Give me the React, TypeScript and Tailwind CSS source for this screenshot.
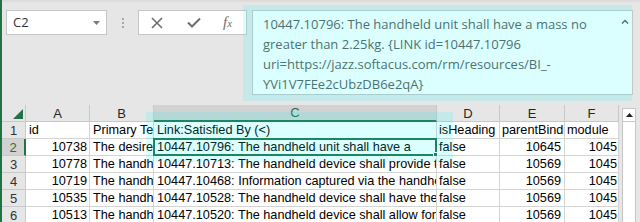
import React from "react";

type Row = {
  n: number;
  a: string;
  b: string;
  c: string;
  d: string;
  e: string;
  f: string;
  num: boolean;
};

const ROWS: Row[] = [
  { n: 1, a: "id", b: "Primary Text", c: "Link:Satisfied By (<)", d: "isHeading", e: "parentBinding", f: "module", num: false },
  { n: 2, a: "10738", b: "The desired weight", c: "10447.10796: The handheld unit shall have a", d: "false", e: "10645", f: "1045", num: true },
  { n: 3, a: "10778", b: "The handheld", c: "10447.10713: The handheld device shall provide the user", d: "false", e: "10569", f: "1045", num: true },
  { n: 4, a: "10719", b: "The handheld", c: "10447.10468: Information captured via the handheld", d: "false", e: "10569", f: "1045", num: true },
  { n: 5, a: "10535", b: "The handheld", c: "10447.10528: The handheld device shall have the", d: "false", e: "10569", f: "1045", num: true },
  { n: 6, a: "10513", b: "The handheld", c: "10447.10520: The handheld device shall allow for", d: "false", e: "10569", f: "1045", num: true },
];

const FORMULA = [
  "10447.10796: The handheld unit shall have a mass no",
  "greater than 2.25kg. {LINK id=10447.10796",
  "uri=https://jazz.softacus.com/rm/resources/BI_-",
  "YVi1V7FEe2cUbzDB6e2qA}",
];

const cell = "h-[17px] leading-[16px] border-r border-b border-[#d4d4d4] bg-white whitespace-nowrap overflow-hidden";
const head = "h-[17px] leading-[17px] border-r border-b border-[#c8c8c8] text-center text-[#262626]";

export default function App() {
  return (
    <div className="relative w-[640px] h-[222px] overflow-hidden bg-[#e6e6e6] border-l-2 border-[#217346] font-['Liberation_Sans',Arial,sans-serif] text-[12.7px] text-black">
      <div className="h-[3px] bg-gradient-to-b from-[#d8d8d8] to-[#e6e6e6]" />

      {/* Formula bar */}
      <div className="flex items-start h-[102px] pt-[7px] pl-[4px] font-['Open_Sans','Noto_Sans',sans-serif]">
        <div className="w-[101px] h-[25px] bg-white border border-[#c6c6c6] flex items-center justify-between pl-[6px] pr-[6px] text-[13px] text-[#333]">
          <span>C2</span>
          <svg width="7" height="4" viewBox="0 0 7 4">
            <path d="M0 0 L7 0 L3.5 4 Z" fill="#7a7a7a" />
          </svg>
        </div>
        <div className="w-[31px] h-[25px] flex flex-col items-center justify-center gap-[2px] pt-[1px]">
          <span className="w-[2px] h-[2px] bg-[#a8a8a8]" />
          <span className="w-[2px] h-[2px] bg-[#a8a8a8]" />
          <span className="w-[2px] h-[2px] bg-[#a8a8a8]" />
        </div>
        <div className="w-[109px] h-[25px] bg-white border border-[#c6c6c6] flex items-center pl-[12px]">
          <svg width="12" height="12" viewBox="0 0 12 12">
            <path d="M1 1 L11 11 M11 1 L1 11" stroke="#6e6e6e" strokeWidth="1.6" />
          </svg>
          <svg className="ml-[24px]" width="14" height="11" viewBox="0 0 14 11">
            <path d="M1 5.5 L5 9.5 L13 1.5" stroke="#6e6e6e" strokeWidth="2" fill="none" />
          </svg>
          <span className="ml-[22px] font-['Liberation_Serif',serif] italic text-[15px] leading-none text-[#6e6e6e]">
            f<span className="text-[11px]">x</span>
          </span>
        </div>
        <div className="ml-[5px] w-[381px] h-[85px] bg-white border border-[#c6c6c6] flex items-start justify-between pl-[10px] pr-[3px] pt-[3px] text-[13px] leading-[20px] text-[#5a5a5a]">
          <div>
            {FORMULA.map((l) => (
              <div key={l} className="whitespace-nowrap">{l}</div>
            ))}
          </div>
          <svg className="mt-[5px]" width="8" height="5" viewBox="0 0 8 5">
            <path d="M1 4.5 L4 1.5 L7 4.5" stroke="#5a5a5a" strokeWidth="1.4" fill="none" />
          </svg>
        </div>
      </div>

      {/* Grid */}
      <div className="flex">
        <div className="w-[617px]">
          <div className="flex bg-[#e6e6e6] text-[13px]">
            <div className={`w-[24px] ${head} flex items-end justify-end pr-[2px] pb-[2px]`}>
              <svg width="10" height="10" viewBox="0 0 10 10">
                <path d="M10 0 L10 10 L0 10 Z" fill="#217346" />
              </svg>
            </div>
            <div className={`w-[64px] ${head}`}>A</div>
            <div className={`w-[64px] ${head}`}>B</div>
            <div className="w-[283px] h-[17px] leading-[16px] text-center bg-[#d2d2d2] text-[#217346] border-r border-[#c8c8c8] border-b-2 border-b-[#217346]">C</div>
            <div className={`w-[63px] ${head}`}>D</div>
            <div className={`w-[65px] ${head}`}>E</div>
            <div className={`w-[54px] ${head}`}>F</div>
          </div>
          {ROWS.map((r) => (
            <div key={r.n} className="flex">
              <div
                className={
                  r.n === 2
                    ? "w-[24px] h-[17px] leading-[17px] text-[13px] text-center bg-[#d2d2d2] text-[#217346] border-b border-[#c8c8c8] border-r-2 border-r-[#217346]"
                    : "w-[24px] h-[17px] leading-[17px] text-[13px] text-center text-[#333] border-r border-b border-[#c8c8c8]"
                }
              >
                {r.n}
              </div>
              <div className={`w-[64px] ${cell} ${r.num ? "text-right pr-[2px]" : "pl-[3px]"}`}>{r.a}</div>
              <div className={`w-[64px] ${cell} pl-[3px]`}>{r.b}</div>
              <div className="relative w-[283px] h-[17px] leading-[16px] border-r border-b border-[#d4d4d4] bg-white pl-[3px]">
                <div className="overflow-hidden whitespace-nowrap">{r.c}</div>
                {r.n === 2 && (
                  <div className="absolute -left-[1px] -top-[1px] w-[284px] h-[18px] border-2 border-[#217346]">
                    <div className="absolute -right-[3px] -bottom-[3px] w-[5px] h-[5px] bg-[#217346] border border-white" />
                  </div>
                )}
              </div>
              <div className={`w-[63px] ${cell} pl-[2px]`}>{r.d}</div>
              <div className={`w-[65px] ${cell} ${r.num ? "text-right pr-[3px]" : "pl-[2px]"}`}>{r.e}</div>
              <div className={`w-[54px] ${cell} ${r.num ? "text-right pr-[1px]" : "pl-[2px]"}`}>{r.f}</div>
            </div>
          ))}
        </div>
        <div className="ml-[3px] w-[14px] pt-[3px] flex flex-col">
          <div className="h-[14px] bg-white border border-[#c6c6c6] flex items-center justify-center">
            <svg width="7" height="4" viewBox="0 0 7 4">
              <path d="M0 4 L7 4 L3.5 0 Z" fill="#222" />
            </svg>
          </div>
          <div className="h-[120px] bg-white border border-t-0 border-[#c6c6c6]" />
        </div>
      </div>

      {/* Highlight overlays */}
      <div className="absolute left-[241px] top-[5px] w-[389px] h-[96px] bg-[rgba(0,255,255,0.14)] pointer-events-none" />
      <div className="absolute left-[144px] top-[112px] w-[307px] h-[50px] bg-[rgba(0,255,255,0.14)] pointer-events-none" />
    </div>
  );
}
